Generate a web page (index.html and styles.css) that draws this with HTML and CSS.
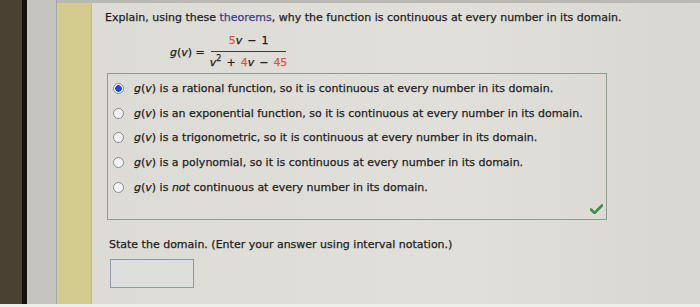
FILE: index.html
```html
<!DOCTYPE html>
<html>
<head>
<meta charset="utf-8">
<link rel="stylesheet" href="styles.css">
</head>
<body>
<div class="screen">
  <div class="bezel"></div>
  <div class="edge"></div>
  <div class="gutter"></div>
  <div class="page">
    <div class="topline"></div>
    <div class="page-body">
      <div class="band"></div>
      <div class="main">
        <p class="prompt">Explain, using these <span class="link">theorems</span>, why the function is continuous at every number in its domain.</p>
        <div class="formula">
          <span class="lhs"><i>g</i>(<i>v</i>) =</span>
          <span class="frac">
            <span class="num"><span class="red">5</span><i>v</i><span class="op">&minus;</span>1</span>
            <span class="den"><i>v</i><sup>2</sup><span class="op">+</span><span class="red">4</span><i>v</i><span class="op">&minus;</span><span class="red">45</span></span>
          </span>
        </div>
        <div class="options">
          <div class="opt"><span class="radio on"></span><span><i>g</i>(<i>v</i>) is a rational function, so it is continuous at every number in its domain.</span></div>
          <div class="opt"><span class="radio"></span><span><i>g</i>(<i>v</i>) is an exponential function, so it is continuous at every number in its domain.</span></div>
          <div class="opt"><span class="radio"></span><span><i>g</i>(<i>v</i>) is a trigonometric, so it is continuous at every number in its domain.</span></div>
          <div class="opt"><span class="radio"></span><span><i>g</i>(<i>v</i>) is a polynomial, so it is continuous at every number in its domain.</span></div>
          <div class="opt"><span class="radio"></span><span><i>g</i>(<i>v</i>) is <i>not</i> continuous at every number in its domain.</span></div>
          <svg class="check" width="13" height="10" viewBox="0 0 13 10"><path d="M1 5.5 L4.5 9 L12 1.5" fill="none" stroke="#3f8f4a" stroke-width="2.6" stroke-linecap="round" stroke-linejoin="round"/></svg>
        </div>
        <p class="state">State the domain. (Enter your answer using interval notation.)</p>
        <div class="answer"></div>
      </div>
    </div>
  </div>
</div>
</body>
</html>
```
FILE: styles.css
```css
html, body { margin: 0; padding: 0; }
body { width: 700px; height: 307px; overflow: hidden; background: #d8d6d0; font-family: "DejaVu Sans", Verdana, sans-serif; }
.screen { display: flex; height: 304px; border-bottom: 3px solid #eeeeea; }
.bezel { width: 22px; background: #4b4132; }
.edge { width: 5px; background: #15120e; }
.gutter { width: 29px; background: #c6c4bf; border-right: 1px solid #a8a69e; }
.page { flex: 1; display: flex; flex-direction: column; }
.topline { height: 3px; background: #b9b8b2; }
.page-body { flex: 1; display: flex; }
.band { width: 34px; background: #d3cc8e; border-right: 1px solid #c2bc86; }
.main { flex: 1; padding-left: 13px; background: linear-gradient(90deg, #dcdbd5 0%, #e0dfd9 60%, #d9d7d1 100%); color: #1e1e1e; font-size: 11px; -webkit-text-stroke: 0.25px #1e1e1e; }
.prompt { margin: 8px 0 0 0; line-height: 13px; }
.link { color: #3b3f8c; -webkit-text-stroke-color: #3b3f8c; }
.formula { display: flex; align-items: center; margin: 11px 0 0 65px; height: 34px; }
.lhs { margin-right: 2px; }
.frac { display: flex; flex-direction: column; align-items: center; }
.num { padding: 0 18px 4px; border-bottom: 1px solid #3a3a3a; line-height: 12px; }
.den { padding: 5px 3px 0; line-height: 12px; }
.op { margin: 0 5px; }
.den sup { font-size: 8px; line-height: 0; vertical-align: 5px; }
.red { color: #d9564a; -webkit-text-stroke-color: #d9564a; }
.options { position: relative; margin: 4px 0 0 2px; width: 500px; height: 147px; border: 1px solid #8f9c8c; box-sizing: border-box; padding-top: 2px; }
.opt { display: flex; align-items: center; height: 24.8px; padding-left: 5px; }
.radio { width: 9px; height: 9px; border-radius: 50%; border: 1px solid #8a8a8a; background: #f4f4f2; margin-right: 10px; flex: none; -webkit-text-stroke: 0; }
.radio.on { border-color: #7d8fbf; background: radial-gradient(circle, #1c47d8 0 3px, #f4f4f2 3.5px); }
.check { position: absolute; right: 3px; bottom: 5px; }
.state { margin: 18px 0 0 4px; line-height: 13px; }
.answer { margin: 8px 0 0 5px; width: 84px; height: 29px; border: 1px solid #8b99ad; box-sizing: border-box; background: #dedfdc; }
```
